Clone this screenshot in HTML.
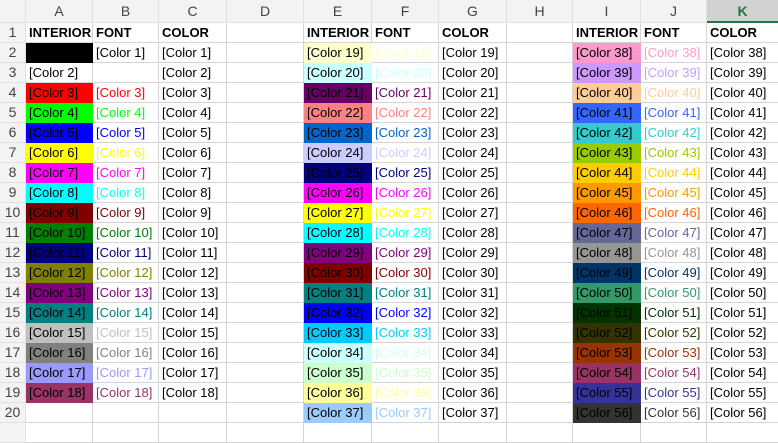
<!DOCTYPE html>
<html><head><meta charset="utf-8">
<style>
body{margin:0;width:778px;height:424px;overflow:hidden;background:#fff;font-family:"Liberation Sans",sans-serif;}
.c{position:absolute;box-sizing:border-box;border-right:1px solid #d4d4d4;border-bottom:1px solid #d4d4d4;font-size:13px;line-height:20px;padding-left:3px;white-space:nowrap;overflow:visible;color:#000;}
.h{background:#f3f3f3;color:#444;text-align:center;padding:0;border-color:#e1e1e1;font-size:14px;}
.sel{background:#d2d2d2;color:#217346;font-weight:bold;border-bottom:2px solid #217346;}
.b{font-weight:bold;}
</style></head><body>
<div id="g"></div>
<script>
var pal=["000000","FFFFFF","FF0000","00FF00","0000FF","FFFF00","FF00FF","00FFFF","800000","008000","000080","808000","800080","008080","C0C0C0","808080","9999FF","993366","FFFFCC","CCFFFF","660066","FF8080","0066CC","CCCCFF","000080","FF00FF","FFFF00","00FFFF","800080","800000","008080","0000FF","00CCFF","CCFFFF","CCFFCC","FFFF99","99CCFF","FF99CC","CC99FF","FFCC99","3366FF","33CCCC","99CC00","FFCC00","FF9900","FF6600","666699","969696","003366","339966","003300","333300","993300","993366","333399","333333"];
var w=[26,67,66,68,77,68,67,68,66,68,66,72];
var names=["","A","B","C","D","E","F","G","H","I","J","K"];
var xs=[0];for(var i=0;i<w.length;i++)xs.push(xs[i]+w[i]);
var H=23,R=20,out="";
function cell(col,row,txt,cls,st){var y=row==0?0:H+(row-1)*R;var h=row==0?H:R;
out+='<div class="c '+(cls||"")+'" style="left:'+xs[col]+'px;top:'+y+'px;width:'+w[col]+'px;height:'+h+'px;'+(row==0?'line-height:'+(H-1)+'px;':'')+(st||"")+'">'+txt+'</div>';}
for(var c=0;c<12;c++)cell(c,0,names[c],"h"+(c==11?" sel":""),"");
for(var r=1;r<=21;r++)cell(0,r,r<=20?r:"","h","line-height:19px;");
for(var r=1;r<=21;r++)for(var c=1;c<12;c++){
 var t="",st="",cls="";
 var blk=c<=4?0:(c<=8?1:2);var off=(c-1)%4; var base=[1,19,38][blk]; var max=[18,37,56][blk];
 if(off<3){
  if(r==1){t=["INTERIOR","FONT","COLOR"][off];cls="b";}
  else{var n=base+r-2; if(n<=max&&r<=20){var col="#"+pal[n-1];t="[Color "+n+"]";
   if(off==0){st="background:"+col+";border-color:"+(n==2?"#d4d4d4":col)+";";}
   else if(off==1){st="color:"+col+";";}}}
 }
 cell(c,r,t,cls,st);
}
document.getElementById("g").innerHTML=out;
</script>
</body></html>
